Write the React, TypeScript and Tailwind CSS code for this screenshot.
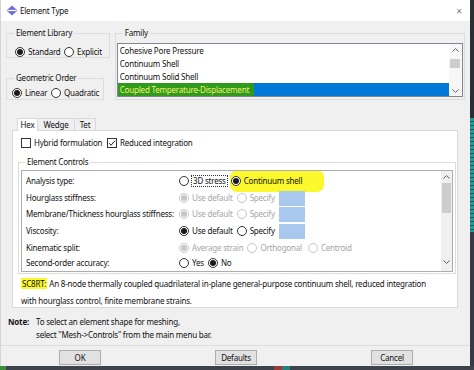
import React from "react";
import clsx from "clsx";

function Radio({ on = false, off = false }: { on?: boolean; off?: boolean }) {
  return (
    <span
      className={clsx(
        "flex h-[10px] w-[10px] shrink-0 items-center justify-center rounded-full border bg-white",
        off ? "border-[#c6c6c6]" : "border-[#333333]"
      )}
    >
      {on && <span className={clsx("h-[6px] w-[6px] rounded-full", off ? "bg-[#c6c6c6]" : "bg-[#1a1a1a]")} />}
    </span>
  );
}

function Opt({ on, off, label, className }: { on?: boolean; off?: boolean; label: string; className?: string }) {
  return (
    <span className={clsx("flex items-center gap-[3px]", off && "text-[#a6a6a6]", className)}>
      <Radio on={on} off={off} />
      {label}
    </span>
  );
}

function Check({ on = false }: { on?: boolean }) {
  return (
    <span className="flex h-[10px] w-[10px] shrink-0 items-center justify-center border border-[#333333] bg-white">
      {on && (
        <svg width="8" height="8" viewBox="0 0 8 8">
          <path d="M1 4.2 L3.1 6.2 L7 1.6" fill="none" stroke="#222" strokeWidth="1" />
        </svg>
      )}
    </span>
  );
}

function Chevron({ up = false }: { up?: boolean }) {
  return (
    <svg width="7" height="4" viewBox="0 0 7 4">
      <path d={up ? "M0.5 3.5 L3.5 0.6 L6.5 3.5" : "M0.5 0.5 L3.5 3.4 L6.5 0.5"} fill="none" stroke="#5f5f5f" strokeWidth="1" />
    </svg>
  );
}

function Swatch() {
  return <span className="ml-[4px] h-[15px] w-[26px] bg-[#a9c8ee]" />;
}

function Row({ label, h, children }: { label: string; h: string; children: React.ReactNode }) {
  return (
    <div className={clsx("flex items-center", h)}>
      <span className="w-[153px] shrink-0">{label}</span>
      <div className="flex items-center">{children}</div>
    </div>
  );
}

export default function App() {
  return (
    <div className="flex h-[370px] w-[474px] flex-col overflow-hidden bg-[#363b43] font-['Noto_Sans','Liberation_Sans',sans-serif] text-[8px] tracking-[-0.2px] text-[#111]">
      <div className="flex h-[366px]">
        <div className="flex w-[470px] flex-col border-l border-[#d4d4d4] bg-[#f0f0f0]">
          {/* title bar */}
          <div className="flex h-[21px] items-center bg-white pl-[5px] pr-[8px]">
            <svg width="12" height="11" viewBox="0 0 12 11">
              <path d="M6 0.5 L11.5 5.5 L6 10.5 L0.5 5.5 Z" fill="#6e6fd8" />
              <path d="M1.5 5.5 H10.5" stroke="#ffffff" strokeWidth="1.2" />
            </svg>
            <span className="ml-[2px]">Element Type</span>
            <span className="ml-auto text-[11px] font-light leading-none text-[#333]">×</span>
          </div>

          {/* top groups */}
          <div className="mt-[7px] flex gap-[5px] px-[5px]">
            <div className="flex w-[104px] flex-col">
              <fieldset className="border border-[#dcdcdc]">
                <legend className="ml-[7px] px-[2px] leading-[10px]">Element Library</legend>
                <div className="mt-[9px] flex h-[10px] items-center pl-[8px]">
                  <Opt on label="Standard" className="w-[49px]" />
                  <Opt label="Explicit" />
                </div>
              </fieldset>
              <fieldset className="mt-[15px] w-[98px] border border-[#dcdcdc]">
                <legend className="ml-[7px] px-[2px] leading-[10px]">Geometric Order</legend>
                <div className="mb-[1px] mt-[5px] flex h-[10px] items-center pl-[5px]">
                  <Opt on label="Linear" className="w-[39px]" />
                  <Opt label="Quadratic" />
                </div>
              </fieldset>
            </div>

            <fieldset className="h-[72px] w-[351px] border border-[#dcdcdc]">
              <legend className="ml-[7px] px-[2px] leading-[10px]">Family</legend>
              <div className="ml-[1px] mt-[5px] flex h-[54px] w-[346px] border border-[#828790] bg-white">
                <div className="flex flex-1 flex-col">
                  <div className="flex h-[13px] items-center pl-[2px]">Cohesive Pore Pressure</div>
                  <div className="flex h-[13px] items-center pl-[2px]">Continuum Shell</div>
                  <div className="flex h-[13px] items-center pl-[2px]">Continuum Solid Shell</div>
                  <div className="flex h-[13px] items-center bg-[#0078d7]">
                    <span className="flex h-[13px] items-center rounded-[2px] bg-[#2f9a1c] pl-[2px] pr-[5px] text-[#f1f36c]">
                      Coupled Temperature-Displacement
                    </span>
                  </div>
                </div>
                <div className="flex w-[13px] flex-col items-center bg-[#f7f7f7]">
                  <div className="flex h-[11px] items-center">
                    <Chevron up />
                  </div>
                  <div className="mt-[4px] h-[9px] w-[10px] bg-[#cdcdcd]" />
                  <div className="flex-1" />
                  <div className="flex h-[10px] items-center">
                    <Chevron />
                  </div>
                </div>
              </div>
            </fieldset>
          </div>

          {/* tabs */}
          <div className="ml-[11px] mt-[18px] w-[446px]">
            <div className="flex h-[12px] items-end pl-[5px]">
              <div className="relative z-10 -mb-px flex h-[13px] w-[21px] items-center justify-center border border-b-0 border-[#d9d9d9] bg-white">
                Hex
              </div>
              <div className="flex h-[12px] w-[37px] items-center justify-center border border-b-0 border-l-0 border-[#d9d9d9] bg-[#f0f0f0]">
                Wedge
              </div>
              <div className="flex h-[12px] w-[21px] items-center justify-center border border-b-0 border-l-0 border-[#d9d9d9] bg-[#f0f0f0]">
                Tet
              </div>
            </div>

            <div className="h-[178px] border border-[#d9d9d9] bg-white pl-[5px]">
              <div className="mt-[6px] flex h-[12px] items-center pl-[3px]">
                <span className="flex w-[86px] items-center gap-[3px]">
                  <Check />
                  Hybrid formulation
                </span>
                <span className="flex items-center gap-[3px]">
                  <Check on />
                  Reduced integration
                </span>
              </div>

              <fieldset className="mt-[8px] w-[438px] border border-[#dcdcdc]">
                <legend className="ml-[6px] px-[2px] leading-[10px]">Element Controls</legend>
                <div className="mb-[1px] ml-[2px] mt-[3px] flex h-[102px] w-[432px] overflow-hidden border border-[#abadb3] bg-white">
                  <div className="flex flex-1 flex-col pl-[4px] pt-[1px]">
                    <Row label="Analysis type:" h="h-[18px]">
                      <span className="flex items-center gap-[2px]">
                        <Radio />
                        <span className="border border-dotted border-[#333] px-[1px] leading-[10px]">3D stress</span>
                      </span>
                      <span className="ml-[2px] flex h-[22px] items-center gap-[3px] rounded-[7px] bg-[#fbf82c] pl-[1px] pr-[22px]">
                        <Radio on />
                        Continuum shell
                      </span>
                    </Row>
                    <Row label="Hourglass stiffness:" h="h-[17px]">
                      <Opt on off label="Use default" />
                      <Opt off label="Specify" className="ml-[4px]" />
                      <Swatch />
                    </Row>
                    <Row label="Membrane/Thickness hourglass stiffness:" h="h-[17px]">
                      <Opt on off label="Use default" />
                      <Opt off label="Specify" className="ml-[4px]" />
                      <Swatch />
                    </Row>
                    <Row label="Viscosity:" h="h-[20px]">
                      <Opt on label="Use default" />
                      <Opt label="Specify" className="ml-[4px]" />
                      <Swatch />
                    </Row>
                    <Row label="Kinematic split:" h="h-[16px]">
                      <Opt on off label="Average strain" />
                      <Opt off label="Orthogonal" className="ml-[4px]" />
                      <Opt off label="Centroid" className="ml-[6px]" />
                    </Row>
                    <Row label="Second-order accuracy:" h="h-[16px]">
                      <Opt label="Yes" />
                      <Opt on label="No" className="ml-[4px]" />
                    </Row>
                  </div>
                  <div className="flex w-[11px] flex-col items-center bg-[#f0f0f0]">
                    <div className="flex h-[12px] items-center">
                      <Chevron up />
                    </div>
                    <div className="h-[30px] w-[9px] bg-[#cdcdcd]" />
                    <div className="flex-1" />
                    <div className="mb-[4px] flex h-[10px] items-center">
                      <Chevron />
                    </div>
                  </div>
                </div>
              </fieldset>

              <p className="mt-[1px] pl-[3px] leading-[17px]">
                <span className="bg-[#fbf82c] px-[1px]">SC8RT:</span> An 8-node thermally coupled quadrilateral in-plane
                general-purpose continuum shell, reduced integration
                <br />
                with hourglass control, finite membrane strains.
              </p>
            </div>
          </div>

          {/* note */}
          <div className="mt-[7px] flex pl-[7px] leading-[13px]">
            <span className="w-[28px] shrink-0 font-bold">Note:</span>
            <span>
              To select an element shape for meshing,
              <br />
              select "Mesh-&gt;Controls" from the main menu bar.
            </span>
          </div>

          <div className="mt-[4px] border-t border-[#dcdcdc]" />

          <div className="mt-[4px] flex gap-[114px] pl-[58px]">
            <button className="flex h-[15px] w-[42px] items-center justify-center border border-[#adadad] bg-[#e1e1e1]">OK</button>
            <button className="flex h-[15px] w-[42px] items-center justify-center border border-[#adadad] bg-[#e1e1e1]">Defaults</button>
            <button className="flex h-[15px] w-[42px] items-center justify-center border border-[#adadad] bg-[#e1e1e1]">Cancel</button>
          </div>
        </div>

        {/* desktop strip at right */}
        <div className="flex w-[4px] flex-col">
          <div className="h-[118px] bg-[#2b2f35]" />
          <div className="h-[114px] bg-[repeating-linear-gradient(180deg,#1f9d95_0px,#1f9d95_3px,#27555a_3px,#27555a_4px)]" />
          <div className="flex-1 bg-[#343945]" />
        </div>
      </div>
      <div className="flex h-[4px]">
        <div className="w-[6px] bg-[#3f8f3a]" />
        <div className="w-[268px] bg-[#3d434b]" />
        <div className="w-[8px] bg-[#9a3b3b]" />
        <div className="w-[8px] bg-[#2a7f7a]" />
        <div className="flex-1 bg-[#3d434b]" />
      </div>
    </div>
  );
}
